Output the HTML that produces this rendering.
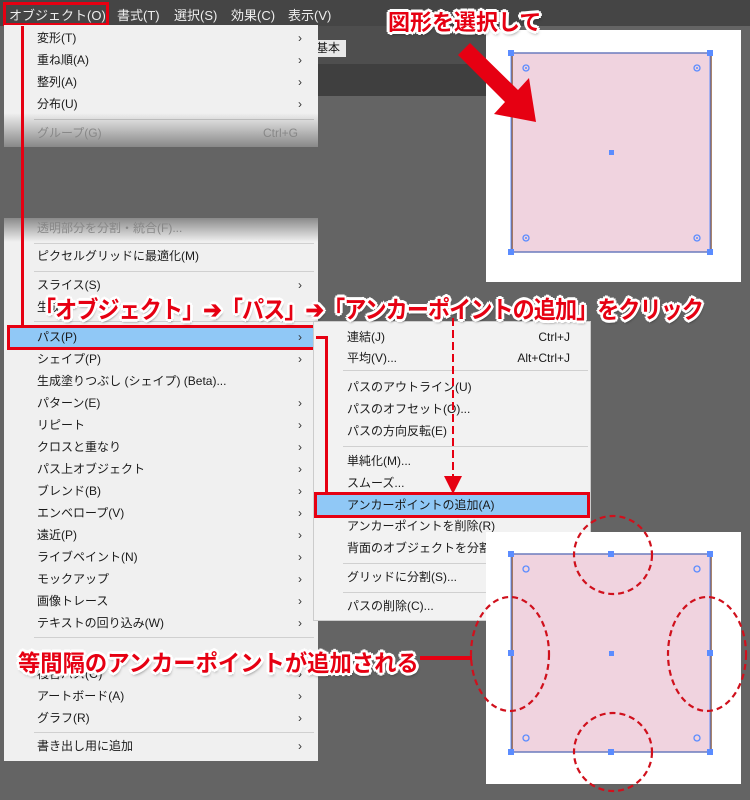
<!DOCTYPE html>
<html><head><meta charset="utf-8"><style>
*{margin:0;padding:0;box-sizing:border-box}
body{width:750px;height:800px;background:#646464;position:relative;overflow:hidden;font-family:"Liberation Sans","Noto Sans CJK JP",sans-serif;font-size:12px;color:#1a1a1a}
.a{position:absolute}
.mbar{left:0;top:0;width:750px;height:26px;background:#454545}
.mbar span{position:absolute;top:5px;color:#eee;font-size:13px}
.menu{background:#f0f0f0}
.it{position:absolute;left:37px;height:22px;line-height:22px;white-space:nowrap}
.ar{position:absolute;left:298px;height:22px;line-height:22px;color:#333;font-size:12px}
.sep{position:absolute;left:34px;width:280px;height:1px;background:#d0d0d0}
.si{position:absolute;left:347px;height:22px;line-height:22px;white-space:nowrap}
.sc{position:absolute;right:180px;height:22px;line-height:22px}
.ssep{position:absolute;left:343px;width:245px;height:1px;background:#d0d0d0}
.lab{position:absolute;color:#e60012;font-weight:bold;white-space:nowrap;transform-origin:0 0;
text-shadow:2px 0 #fff,-2px 0 #fff,0 2px #fff,0 -2px #fff,2px 2px #fff,-2px -2px #fff,2px -2px #fff,-2px 2px #fff,3px 0 #fff,-3px 0 #fff,0 3px #fff,0 -3px #fff,1px 3px 3px rgba(0,0,0,.5)}
.red{position:absolute;background:#e60012}
.hi{position:absolute;background:#90c8f6;border:3px solid #e60012}
</style></head><body>
<div class="a mbar">
<span style="left:9px">オブジェクト(O)</span>
<span style="left:117px">書式(T)</span>
<span style="left:174px">選択(S)</span>
<span style="left:231px">効果(C)</span>
<span style="left:288px">表示(V)</span>
</div>
<div class="a" style="left:3px;top:2px;width:106px;height:24px;border:3px solid #e60012"></div>
<div class="a" style="left:318px;top:26px;width:170px;height:38px;background:#4e4e4e"></div>
<div class="a" style="left:316px;top:40px;width:30px;height:17px;background:#e8e8e8;font-size:12px;line-height:17px">基本</div>
<div class="a" style="left:318px;top:64px;width:170px;height:32px;background:#3f3f3f"></div>

<div class="a menu" style="left:4px;top:25px;width:314px;height:122px;background:linear-gradient(#f0f0f0 0,#f0f0f0 88px,#888 122px)"></div>
<div class="it" style="top:27px">変形(T)</div><div class="ar" style="top:27px">›</div>
<div class="it" style="top:49px">重ね順(A)</div><div class="ar" style="top:49px">›</div>
<div class="it" style="top:71px">整列(A)</div><div class="ar" style="top:71px">›</div>
<div class="it" style="top:93px">分布(U)</div><div class="ar" style="top:93px">›</div>
<div class="sep" style="top:119px;background:#bbb"></div>
<div class="it" style="top:122px;color:#888">グループ(G)</div><div class="a" style="left:263px;top:126px;color:#888">Ctrl+G</div>

<div class="a menu" style="left:4px;top:218px;width:314px;height:543px;background:linear-gradient(#8a8a8a 0,#f0f0f0 24px,#f0f0f0 100%)"></div>
<div class="it" style="top:217px;color:#888">透明部分を分割・統合(F)...</div>
<div class="sep" style="top:243px"></div>
<div class="it" style="top:245px">ピクセルグリッドに最適化(M)</div>
<div class="sep" style="top:271px"></div>
<div class="it" style="top:274px">スライス(S)</div><div class="ar" style="top:274px">›</div>
<div class="it" style="top:296px">生成</div>
<div class="sep" style="top:321px"></div>
<div class="hi" style="left:7px;top:325px;width:310px;height:25px"></div>
<div class="it" style="top:326px">パス(P)</div><div class="ar" style="top:326px">›</div>
<div class="it" style="top:348px">シェイプ(P)</div><div class="ar" style="top:348px">›</div>
<div class="it" style="top:370px">生成塗りつぶし (シェイプ) (Beta)...</div>
<div class="it" style="top:392px">パターン(E)</div><div class="ar" style="top:392px">›</div>
<div class="it" style="top:414px">リピート</div><div class="ar" style="top:414px">›</div>
<div class="it" style="top:436px">クロスと重なり</div><div class="ar" style="top:436px">›</div>
<div class="it" style="top:458px">パス上オブジェクト</div><div class="ar" style="top:458px">›</div>
<div class="it" style="top:480px">ブレンド(B)</div><div class="ar" style="top:480px">›</div>
<div class="it" style="top:502px">エンベロープ(V)</div><div class="ar" style="top:502px">›</div>
<div class="it" style="top:524px">遠近(P)</div><div class="ar" style="top:524px">›</div>
<div class="it" style="top:546px">ライブペイント(N)</div><div class="ar" style="top:546px">›</div>
<div class="it" style="top:568px">モックアップ</div><div class="ar" style="top:568px">›</div>
<div class="it" style="top:590px">画像トレース</div><div class="ar" style="top:590px">›</div>
<div class="it" style="top:612px">テキストの回り込み(W)</div><div class="ar" style="top:612px">›</div>
<div class="sep" style="top:637px"></div>
<div class="it" style="top:663px">複合パス(O)</div><div class="ar" style="top:663px">›</div>
<div class="it" style="top:685px">アートボード(A)</div><div class="ar" style="top:685px">›</div>
<div class="it" style="top:707px">グラフ(R)</div><div class="ar" style="top:707px">›</div>
<div class="sep" style="top:732px"></div>
<div class="it" style="top:735px">書き出し用に追加</div><div class="ar" style="top:735px">›</div>

<div class="a" style="left:313px;top:321px;width:278px;height:300px;background:#f2f2f2;border:1px solid #ccc"></div>
<div class="si" style="top:326px">連結(J)</div><div class="sc" style="top:326px">Ctrl+J</div>
<div class="si" style="top:347px">平均(V)...</div><div class="sc" style="top:347px">Alt+Ctrl+J</div>
<div class="ssep" style="top:370px"></div>
<div class="si" style="top:376px">パスのアウトライン(U)</div>
<div class="si" style="top:398px">パスのオフセット(O)...</div>
<div class="si" style="top:420px">パスの方向反転(E)</div>
<div class="ssep" style="top:446px"></div>
<div class="si" style="top:450px">単純化(M)...</div>
<div class="si" style="top:472px">スムーズ...</div>
<div class="hi" style="left:314px;top:492px;width:276px;height:26px"></div>
<div class="si" style="top:494px">アンカーポイントの追加(A)</div>
<div class="si" style="top:515px">アンカーポイントを削除(R)</div>
<div class="si" style="top:537px">背面のオブジェクトを分割(D)</div>
<div class="ssep" style="top:563px"></div>
<div class="si" style="top:566px">グリッドに分割(S)...</div>
<div class="ssep" style="top:592px"></div>
<div class="si" style="top:595px">パスの削除(C)...</div>

<div class="red" style="left:21px;top:26px;width:3px;height:300px"></div>
<div class="red" style="left:316px;top:336px;width:12px;height:3px"></div>
<div class="red" style="left:325px;top:336px;width:3px;height:158px"></div>

<svg class="a" style="left:0;top:0" width="750" height="800">
<rect x="486" y="30" width="255" height="252" fill="#fff"/>
<rect x="512" y="53" width="199" height="199" fill="#f0d3df" stroke="#8b5a3c" stroke-width="1.5"/>
<rect x="511" y="53" width="199" height="199" fill="none" stroke="#5b8cff" stroke-width="1"/>
<g fill="#5b8cff"><rect x="508" y="50" width="6" height="6"/><rect x="707" y="50" width="6" height="6"/><rect x="508" y="249" width="6" height="6"/><rect x="707" y="249" width="6" height="6"/><rect x="609" y="150" width="5" height="5"/></g>
<g fill="none" stroke="#5b8cff" stroke-width="1.3"><circle cx="526" cy="68" r="3"/><circle cx="697" cy="68" r="3"/><circle cx="526" cy="238" r="3"/><circle cx="697" cy="238" r="3"/></g>
<g fill="#5b8cff"><circle cx="526" cy="68" r="1"/><circle cx="697" cy="68" r="1"/><circle cx="526" cy="238" r="1"/><circle cx="697" cy="238" r="1"/></g>

<rect x="486" y="532" width="255" height="252" fill="#fff"/>
<rect x="512" y="554" width="199" height="198" fill="#f0d3df" stroke="#8b5a3c" stroke-width="1.5"/>
<rect x="511" y="554" width="199" height="198" fill="none" stroke="#5b8cff" stroke-width="1"/>
<g fill="#5b8cff"><rect x="508" y="551" width="6" height="6"/><rect x="707" y="551" width="6" height="6"/><rect x="508" y="749" width="6" height="6"/><rect x="707" y="749" width="6" height="6"/><rect x="609" y="651" width="5" height="5"/>
<rect x="608" y="551" width="6" height="6"/><rect x="608" y="749" width="6" height="6"/><rect x="508" y="650" width="6" height="6"/><rect x="707" y="650" width="6" height="6"/></g>
<g fill="none" stroke="#5b8cff" stroke-width="1.3"><circle cx="526" cy="569" r="3"/><circle cx="697" cy="569" r="3"/><circle cx="526" cy="738" r="3"/><circle cx="697" cy="738" r="3"/></g>
<g fill="none" stroke="#d0101c" stroke-width="2.2" stroke-dasharray="6,4">
<ellipse cx="613" cy="555" rx="39" ry="39"/><ellipse cx="510" cy="654" rx="39" ry="57"/><ellipse cx="707" cy="654" rx="39" ry="57"/><ellipse cx="613" cy="752" rx="39" ry="39"/></g>
<polygon points="458,55 470,43 518,90 529,78 536,122 494,114 505,102" fill="#e60012"/>
<line x1="453" y1="318" x2="453" y2="478" stroke="#e60012" stroke-width="2" stroke-dasharray="8,4"/>
<polygon points="444,476 462,476 453,494" fill="#e60012"/>
<rect x="420" y="656" width="52" height="4" fill="#e60012"/>
</svg>

<div class="lab" style="left:388px;top:5px;font-size:22px">図形を選択して</div>
<div class="lab" style="left:34px;top:290px;font-size:24px;letter-spacing:-1px;transform:scaleX(0.92)">「オブジェクト」➔「パス」➔「アンカーポイントの追加」をクリック</div>
<div class="lab" style="left:18px;top:644px;font-size:23px;transform:scaleX(0.97)">等間隔のアンカーポイントが追加される</div>
</body></html>
